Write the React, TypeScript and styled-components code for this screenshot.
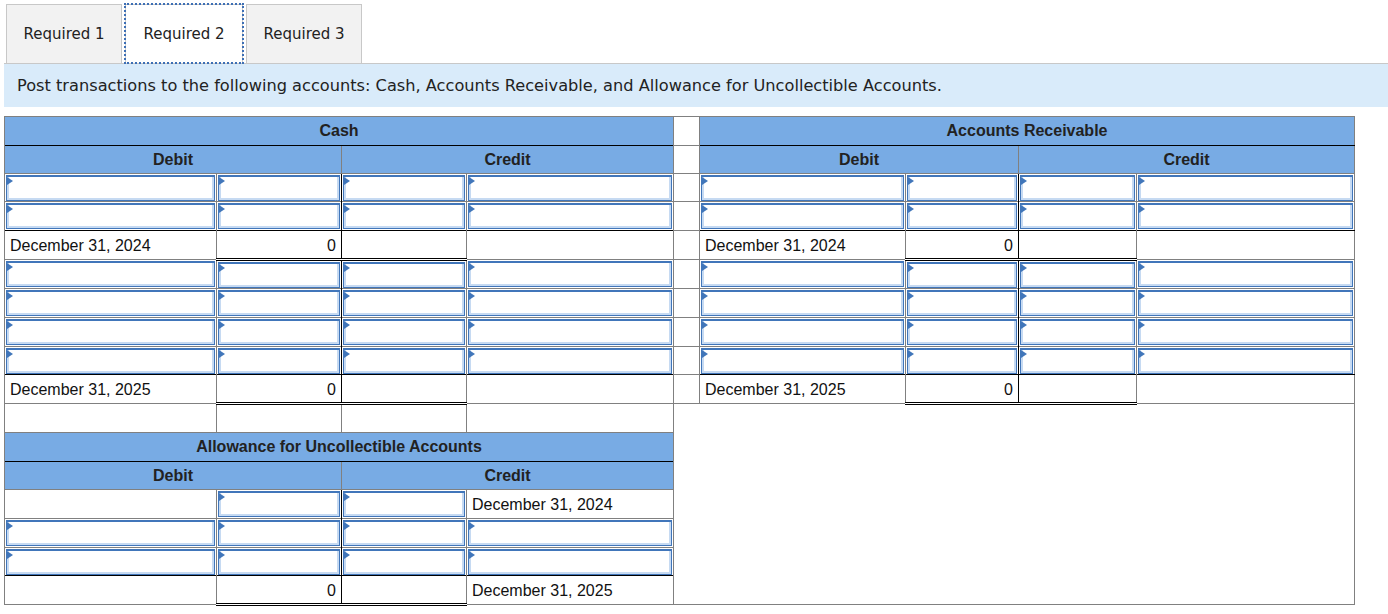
import React from "react";
import styled, { createGlobalStyle } from "styled-components";

const GRAY = "#808080";
const INK = "#000";
const HEAD = "#78abe4";
const FIELD = "#4176ba";

const GlobalStyle = createGlobalStyle`
  html, body {
    margin: 0;
    padding: 0;
    background: #fff;
  }
`;

const Page = styled.div`
  padding: 4px 0 0 4px;
  font-family: "DejaVu Sans", Verdana, sans-serif;
  color: #222;
`;

const TabRow = styled.div`
  display: flex;
  align-items: flex-end;
  gap: 3px;
  padding-left: 2px;
`;

const Tab = styled.button<{ $active?: boolean }>`
  display: flex;
  align-items: center;
  justify-content: center;
  box-sizing: border-box;
  width: ${p => (p.$active ? 118 : 116)}px;
  height: 59px;
  margin: 0;
  padding: 0;
  border: 1px solid #c8c8c8;
  border-bottom: none;
  background: ${p => (p.$active ? "#fff" : "#f2f2f2")};
  outline: ${p => (p.$active ? "2px dotted #3d6fb5" : "none")};
  outline-offset: -1px;
  font-family: "DejaVu Sans", Verdana, sans-serif;
  font-size: 15px;
  color: #222;
  cursor: pointer;
`;

const Prompt = styled.div`
  display: flex;
  align-items: center;
  box-sizing: border-box;
  height: 44px;
  padding-left: 13px;
  border-top: 1px solid #c8c8c8;
  background: #d9ebfa;
  font-size: 16.2px;
  color: #222;
`;

const Sheet = styled.table`
  margin-top: 9px;
  width: 1351px;
  border-collapse: collapse;
  table-layout: fixed;
  border-right: 1px solid ${GRAY};
  border-bottom: 1px solid ${GRAY};
  font-family: "Liberation Sans", Arial, sans-serif;
  font-size: 16px;
  color: #111;
`;

const Row = styled.tr<{ $h: number }>`
  height: ${p => p.$h}px;
`;

const HeadCell = styled.th<{ $rule?: boolean }>`
  padding: 0;
  background: ${HEAD};
  border-top: 1px solid ${p => (p.$rule ? INK : GRAY)};
  border-left: 1px solid ${GRAY};
  font-weight: 700;
  color: #222;
  text-align: center;
  vertical-align: middle;
`;

const Gap = styled.td`
  padding: 0;
  border-top: 1px solid ${GRAY};
  border-left: 1px solid ${GRAY};
`;

const Blank = styled.td`
  padding: 0;
  border-top: 1px solid ${GRAY};
  border-left: 1px solid ${GRAY};
`;

const EntryCell = styled.td<{ $split?: boolean }>`
  position: relative;
  padding: 1px 1px 0 1px;
  border-top: 1px solid ${GRAY};
  border-left: 1px solid ${p => (p.$split ? INK : GRAY)};
  vertical-align: top;
`;

const Entry = styled.input`
  display: block;
  box-sizing: border-box;
  width: 100%;
  height: 26px;
  margin: 0;
  padding: 0 4px;
  border: 1px solid ${FIELD};
  border-top-width: 2px;
  box-shadow: inset 2px -2px 0 #c6daf2, inset -2px 0 0 #c6daf2;
  background: #fff;
  font: inherit;
  outline: none;
`;

const Marker = styled.span`
  position: absolute;
  top: 3px;
  left: 2px;
  width: 0;
  height: 0;
  border-left: 6px solid ${FIELD};
  border-top: 4px solid transparent;
  border-bottom: 4px solid transparent;
`;

const TextCell = styled.td<{ $total?: boolean; $split?: boolean; $double?: boolean; $num?: boolean }>`
  padding: ${p => (p.$num ? "2px 5px 0 0" : "2px 0 0 5px")};
  border-top: 1px solid ${p => (p.$total ? INK : GRAY)};
  border-left: 1px solid ${p => (p.$split ? INK : GRAY)};
  border-bottom: ${p => (p.$double ? `3px double ${INK}` : "none")};
  text-align: ${p => (p.$num ? "right" : "left")};
  vertical-align: middle;
  white-space: nowrap;
`;

const Col = styled.col<{ $w: number }>`
  width: ${p => p.$w}px;
`;

const widths = [212, 125, 125, 207, 26, 206, 113, 118, 218];

function Field({ split }: { split?: boolean }) {
  return (
    <EntryCell $split={split}>
      <Entry type="text" />
      <Marker />
    </EntryCell>
  );
}

// four entry fields of one T-account, the third one sits on the centre line
function Fields() {
  return (
    <>
      <Field />
      <Field />
      <Field split />
      <Field />
    </>
  );
}

function Totals({ date }: { date: string }) {
  return (
    <>
      <TextCell $total>{date}</TextCell>
      <TextCell $total $double $num>0</TextCell>
      <TextCell $total $double $split />
      <TextCell $total />
    </>
  );
}

function Heading({ title }: { title: string }) {
  return <HeadCell colSpan={4}>{title}</HeadCell>;
}

function Sides() {
  return (
    <>
      <HeadCell $rule colSpan={2}>Debit</HeadCell>
      <HeadCell $rule colSpan={2}>Credit</HeadCell>
    </>
  );
}

export default function App() {
  const upper = [29, 28, 28, 29, 29, 29, 29, 29, 28, 29];

  return (
    <>
      <GlobalStyle />
      <Page>
        <TabRow>
          <Tab>Required 1</Tab>
          <Tab $active>Required 2</Tab>
          <Tab>Required 3</Tab>
        </TabRow>
        <Prompt>
          Post transactions to the following accounts: Cash, Accounts Receivable, and Allowance for Uncollectible Accounts.
        </Prompt>
        <Sheet>
          <colgroup>
            {widths.map((w, i) => (
              <Col key={i} $w={w} />
            ))}
          </colgroup>
          <tbody>
            <Row $h={upper[0]}>
              <Heading title="Cash" />
              <Gap />
              <Heading title="Accounts Receivable" />
            </Row>
            <Row $h={upper[1]}>
              <Sides />
              <Gap />
              <Sides />
            </Row>
            {[2, 3].map(i => (
              <Row key={i} $h={upper[i]}>
                <Fields />
                <Gap />
                <Fields />
              </Row>
            ))}
            <Row $h={upper[4]}>
              <Totals date="December 31, 2024" />
              <Gap />
              <Totals date="December 31, 2024" />
            </Row>
            {[5, 6, 7, 8].map(i => (
              <Row key={i} $h={upper[i]}>
                <Fields />
                <Gap />
                <Fields />
              </Row>
            ))}
            <Row $h={upper[9]}>
              <Totals date="December 31, 2025" />
              <Gap />
              <Totals date="December 31, 2025" />
            </Row>
            <Row $h={29}>
              <Blank />
              <Blank />
              <Blank />
              <Blank />
              <Blank colSpan={5} rowSpan={7} />
            </Row>
            <Row $h={29}>
              <Heading title="Allowance for Uncollectible Accounts" />
            </Row>
            <Row $h={28}>
              <Sides />
            </Row>
            <Row $h={29}>
              <Blank />
              <Field />
              <Field split />
              <TextCell>December 31, 2024</TextCell>
            </Row>
            <Row $h={29}>
              <Fields />
            </Row>
            <Row $h={28}>
              <Fields />
            </Row>
            <Row $h={29}>
              <TextCell $total />
              <TextCell $total $double $num>0</TextCell>
              <TextCell $total $double $split />
              <TextCell $total>December 31, 2025</TextCell>
            </Row>
          </tbody>
        </Sheet>
      </Page>
    </>
  );
}
